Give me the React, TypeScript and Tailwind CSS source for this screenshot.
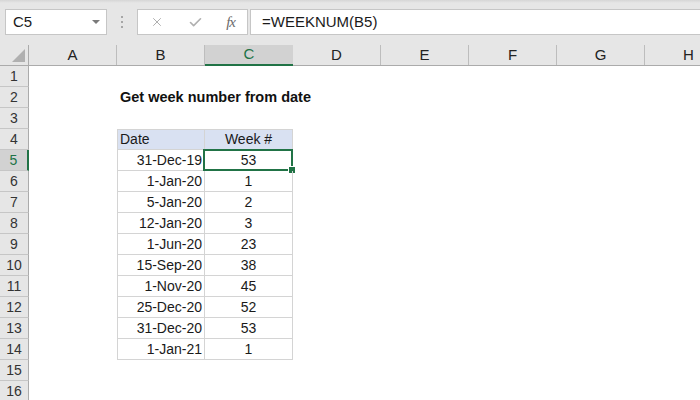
import { X, Check } from "lucide-react";

const cols = ["A", "B", "C", "D", "E", "F", "G", "H"];

const data: [string, string][] = [
  ["31-Dec-19", "53"],
  ["1-Jan-20", "1"],
  ["5-Jan-20", "2"],
  ["12-Jan-20", "3"],
  ["1-Jun-20", "23"],
  ["15-Sep-20", "38"],
  ["1-Nov-20", "45"],
  ["25-Dec-20", "52"],
  ["31-Dec-20", "53"],
  ["1-Jan-21", "1"],
];

function RowHeader({ n, active }: { n: number; active?: boolean }) {
  return (
    <div
      className={
        active
          ? "w-[29px] shrink-0 flex items-center justify-center border-b border-b-[#c6c6c6] border-r-2 border-r-[#217346] bg-[#d2d2d2] text-[#217346]"
          : "w-[29px] shrink-0 flex items-center justify-center border-b border-b-[#c6c6c6] border-r border-r-[#ababab] bg-[#e6e6e6] text-[#333]"
      }
    >
      {n}
    </div>
  );
}

function Cell({ children, className = "" }: { children?: React.ReactNode; className?: string }) {
  return <div className={"w-[88px] shrink-0 flex items-center relative " + className}>{children}</div>;
}

function Row({ n, children }: { n: number; children?: React.ReactNode }) {
  return (
    <div className="flex h-[21px]">
      <RowHeader n={n} active={n === 5} />
      {children}
    </div>
  );
}

export default function App() {
  return (
    <div
      className="w-[700px] h-[400px] overflow-hidden bg-white text-[14px] text-[#1a1a1a]"
      style={{ fontFamily: '"Liberation Sans", Arial, sans-serif' }}
    >
      {/* formula bar */}
      <div className="h-[45px] bg-[#e6e6e6]">
        <div className="h-[3px] bg-gradient-to-b from-[#d6d6d6] to-[#e6e6e6]" />
        <div className="flex items-start pt-[6px]">
          <div className="ml-[5px] w-[102px] h-[26px] bg-white border border-[#c6c6c6] flex items-center justify-between pl-[7px] pr-[6px] text-[15px]">
            <span>C5</span>
            <span className="w-0 h-0 border-l-[4px] border-r-[4px] border-t-[4px] border-l-transparent border-r-transparent border-t-[#7a7a7a]" />
          </div>
          <div className="w-[30px] h-[26px] flex flex-col items-center justify-center gap-[3px]">
            <span className="w-[2px] h-[2px] bg-[#a6a6a6]" />
            <span className="w-[2px] h-[2px] bg-[#a6a6a6]" />
            <span className="w-[2px] h-[2px] bg-[#a6a6a6]" />
          </div>
          <div className="w-[111px] h-[26px] bg-white border border-[#c6c6c6] flex items-center justify-between pl-[12px] pr-[12px]">
            <X size={14} strokeWidth={1.5} color="#a3a3a3" />
            <Check size={15} strokeWidth={2.6} color="#b0b0b0" />
            <span
              className="italic text-[15px] text-[#6b6b6b] tracking-[-1px]"
              style={{ fontFamily: '"Liberation Serif", "Times New Roman", serif' }}
            >
              fx
            </span>
          </div>
          <div className="ml-[2px] flex-1 h-[26px] bg-white border border-r-0 border-[#c6c6c6] flex items-center pl-[11px] text-[15px]">
            =WEEKNUM(B5)
          </div>
        </div>
      </div>

      {/* column headers */}
      <div className="flex h-[21px] bg-[#e6e6e6] border-b border-[#ababab] text-[15px]">
        <div className="w-[29px] h-full shrink-0 border-r border-[#ababab] flex items-end justify-end pr-[3px] pb-[3px]">
          <div className="w-[13px] h-[13px] bg-[#b0b0b0] [clip-path:polygon(100%_0,100%_100%,0_100%)]" />
        </div>
        {cols.map((c) =>
          c === "C" ? (
            <div key={c} className="w-[88px] shrink-0 flex items-center justify-center bg-[#d2d2d2] border-b-2 border-[#217346] text-[#217346] mb-[-1px]">
              {c}
            </div>
          ) : (
            <div key={c} className="w-[88px] shrink-0 flex items-center justify-center border-r border-[#bdbdbd] text-[#222]">
              {c}
            </div>
          )
        )}
      </div>

      {/* grid */}
      <Row n={1} />
      <Row n={2}>
        <Cell />
        <Cell>
          <span className="pl-[3px] font-bold whitespace-nowrap text-[14.5px] text-[#111]">Get week number from date</span>
        </Cell>
      </Row>
      <Row n={3} />
      <Row n={4}>
        <Cell />
        <Cell className="bg-[#d9e1f2] border border-[#d4d4d4] pl-[2px]">Date</Cell>
        <Cell className="bg-[#d9e1f2] border-t border-r border-b border-[#d4d4d4] justify-center">Week #</Cell>
      </Row>
      {data.map(([d, w], i) => (
        <Row key={d} n={i + 5}>
          <Cell />
          <Cell className="border-l border-r border-b border-[#d4d4d4] justify-end pr-[2px]">{d}</Cell>
          <Cell className="border-r border-b border-[#d4d4d4] justify-center">
            {w}
            {i === 0 && (
              <>
                <span className="absolute -left-[2px] -top-[1px] -right-[1px] -bottom-[1px] border-2 border-[#217346] pointer-events-none" />
                <span className="absolute -right-[3px] -bottom-[3px] w-[6px] h-[6px] bg-[#217346] outline outline-1 outline-white" />
              </>
            )}
          </Cell>
        </Row>
      ))}
      <Row n={15} />
      <Row n={16} />
    </div>
  );
}
